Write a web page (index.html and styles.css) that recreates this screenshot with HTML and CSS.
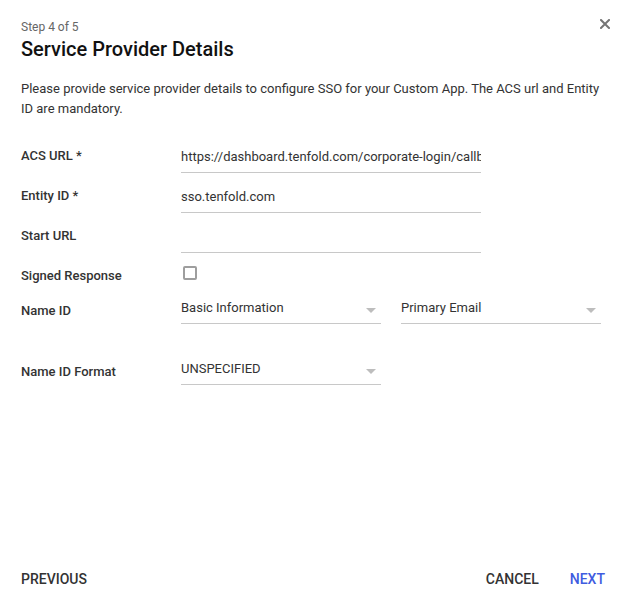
FILE: index.html
```html
<!DOCTYPE html>
<html lang="en">
<head>
<meta charset="utf-8">
<title>Service Provider Details</title>
<link rel="stylesheet" href="styles.css">
</head>
<body>
<div class="dialog">
  <div class="header">
    <div class="step">Step 4 of 5</div>
    <button class="close" aria-label="Close">
      <svg width="10" height="10" viewBox="0 0 10 10"><path d="M1 1L9 9M9 1L1 9" stroke="#757575" stroke-width="2" stroke-linecap="square"/></svg>
    </button>
  </div>
  <h1 class="title">Service Provider Details</h1>
  <p class="desc">Please provide service provider details to configure SSO for your Custom App. The ACS url and Entity ID are mandatory.</p>

  <div class="form">
    <div class="row">
      <div class="label">ACS URL *</div>
      <input class="input" type="text" readonly value="https://dashboard.tenfold.com/corporate-login/callback">
    </div>
    <div class="row">
      <div class="label">Entity ID *</div>
      <input class="input" type="text" readonly value="sso.tenfold.com">
    </div>
    <div class="row">
      <div class="label">Start URL</div>
      <input class="input" type="text" readonly value="">
    </div>
    <div class="row">
      <div class="label">Signed Response</div>
      <div class="checkbox"></div>
    </div>
    <div class="select-row first">
      <div class="label">Name ID</div>
      <div class="select"><span>Basic Information</span><span class="arrow"></span></div>
      <div class="select second"><span>Primary Email</span><span class="arrow"></span></div>
    </div>
    <div class="select-row">
      <div class="label">Name ID Format</div>
      <div class="select"><span>UNSPECIFIED</span><span class="arrow"></span></div>
    </div>
  </div>

  <div class="footer">
    <button class="btn">Previous</button>
    <div class="right">
      <button class="btn">Cancel</button>
      <button class="btn primary">Next</button>
    </div>
  </div>
</div>
</body>
</html>
```
FILE: styles.css
```css
* { box-sizing: border-box; }
html, body { margin: 0; padding: 0; background: #fff; }
body { font-family: Roboto, "Liberation Sans", sans-serif; color: #333; }
.dialog {
  height: 604px;
  display: flex;
  flex-direction: column;
  padding: 19px 20px 15px 21px;
}
.header { display: flex; justify-content: space-between; align-items: flex-start; }
.step { font-size: 12px; line-height: 16px; color: #666; }
.close { border: 0; background: none; padding: 0; width: 10px; height: 10px; display: block; cursor: pointer; }
.close svg { display: block; }
.title { margin: 2px 0 0; font-size: 20px; line-height: 24px; font-weight: 500; color: #111; }
.desc { margin: 18px 0 0; font-size: 13px; line-height: 20px; color: #333; }
.form { margin-top: 17px; }
.row { display: flex; height: 40px; }
.label { width: 160px; flex: none; font-size: 13px; line-height: 20px; font-weight: 500; color: #333; padding-top: 10px; }
.input {
  display: block;
  width: 300px; height: 37px;
  margin: 0;
  padding: 10px 0 6px;
  font-family: Roboto, "Liberation Sans", sans-serif;
  font-size: 13px; line-height: 20px; color: #333;
  border: 0;
  border-bottom: 1px solid #c8c8c8;
  border-radius: 0;
  background: transparent;
  outline: none;
}
.checkbox { width: 14px; height: 14px; margin: 10px 0 0 2px; border: 2px solid #9e9e9e; border-radius: 2px; }
.select-row { display: flex; }
.select-row.first { margin-bottom: 33px; }
.select-row .label { padding-top: 5px; }
.select {
  width: 200px; height: 28px;
  padding: 2px 5px 6px 0;
  display: flex; justify-content: space-between; align-items: flex-start;
  font-size: 13px; line-height: 20px; color: #333;
  border-bottom: 1px solid #c8c8c8;
}
.select.second { margin-left: 20px; }
.arrow {
  width: 0; height: 0; margin-top: 10px;
  border-left: 5px solid transparent;
  border-right: 5px solid transparent;
  border-top: 5px solid #bdbdbd;
}
.footer { margin-top: auto; display: flex; justify-content: space-between; align-items: center; padding-right: 5px; }
.right { display: flex; gap: 31px; }
.btn {
  border: 0; background: none; padding: 0; margin: 0;
  font-family: Roboto, "Liberation Sans", sans-serif;
  font-size: 14px; line-height: 20px; font-weight: 500; text-transform: uppercase;
  color: #333; cursor: pointer;
}
.btn.primary { color: #3f5ce0; }
```
